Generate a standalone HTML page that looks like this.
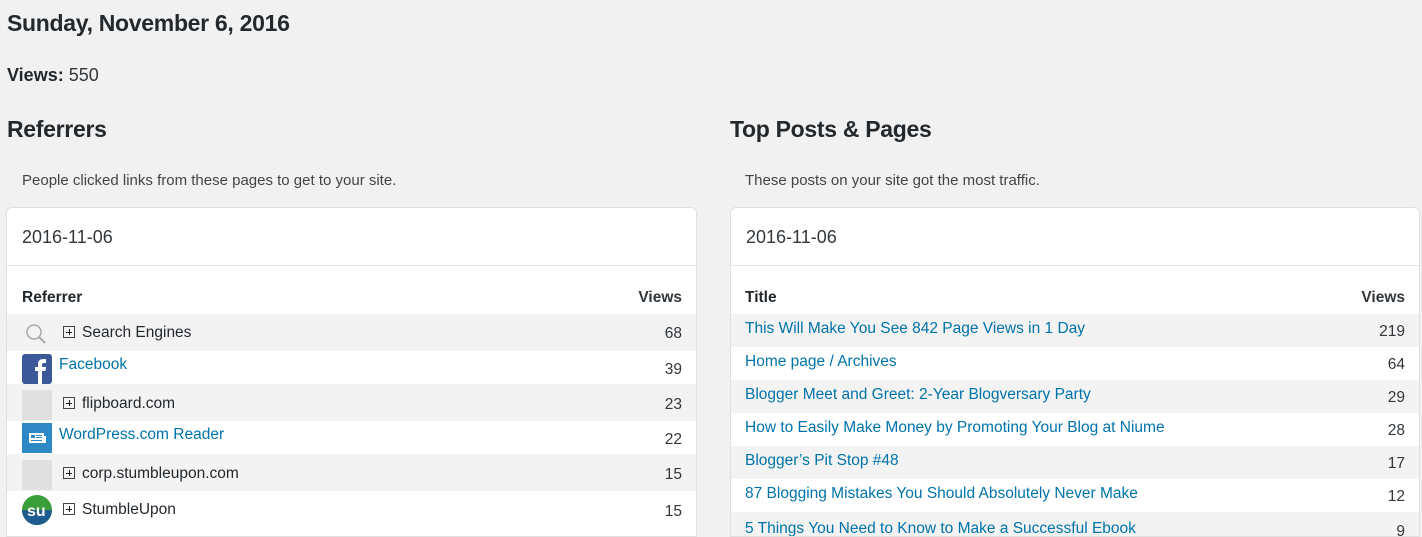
<!DOCTYPE html>
<html><head><style>
*{margin:0;padding:0;box-sizing:border-box}
body{width:1422px;height:525px;overflow:hidden;background:#f1f1f1;font-family:"Liberation Sans",sans-serif;color:#23282d;position:relative}
.a{position:absolute;white-space:nowrap}
h1{position:absolute;left:7px;top:10px;font-size:23px;font-weight:bold;color:#23282d;letter-spacing:-0.3px}
.panel{position:absolute;top:207px;background:#fff;border:1px solid #e0e0e0;border-radius:6px 6px 0 0;height:330px;overflow:hidden}
.ph{height:58px;border-bottom:1px solid #e5e5e5;font-size:18px;padding:19px 0 0 15px;color:#32373c}
.row{position:absolute;left:0;right:0;font-size:15.5px}
.g{background:#f3f3f3}
.lnk{color:#0073aa}
.num{position:absolute;right:14px;color:#32373c}
.plus{display:inline-block;width:12px;height:12px;border:1px solid #444;position:relative;vertical-align:-1px;margin-right:7px}
.plus:before{content:"";position:absolute;left:2px;top:4.5px;width:6px;height:1px;background:#222}
.plus:after{content:"";position:absolute;left:4.5px;top:2px;width:1px;height:6px;background:#222}
.ic{position:absolute;left:15px;width:30px;height:30px}
</style></head><body>
<h1>Sunday, November 6, 2016</h1>
<div class="a" style="left:7px;top:65px;font-size:18px;color:#32373c"><span style="color:#23282d;font-weight:bold">Views:</span> 550</div>
<div class="a" style="left:7px;top:116px;font-size:23px;font-weight:bold;letter-spacing:-0.3px">Referrers</div>
<div class="a" style="left:730px;top:116px;font-size:23px;font-weight:bold;letter-spacing:-0.3px">Top Posts &amp; Pages</div>
<div class="a" style="left:22px;top:172px;font-size:15px;color:#444">People clicked links from these pages to get to your site.</div>
<div class="a" style="left:745px;top:172px;font-size:15px;color:#444">These posts on your site got the most traffic.</div>

<div class="panel" style="left:6px;width:691px">
<div class="ph">2016-11-06</div>
<div class="row" style="top:81px;height:20px;font-weight:bold;font-size:15.5px;padding-left:15px">Referrer<span class="num" style="top:0">Views</span></div>
<div class="row g" style="top:106px;height:37px"><svg class="ic" style="top:6px" viewBox="0 0 30 30"><circle cx="12" cy="12" r="7" fill="none" stroke="#aaa" stroke-width="1.5"/><line x1="17" y1="17" x2="23" y2="23" stroke="#aaa" stroke-width="2"/></svg><span class="a" style="left:56px;top:10px"><span class="plus"></span>Search Engines</span><span class="num" style="top:11px">68</span></div>
<div class="row" style="top:143px;height:33px"><svg class="ic" style="top:3px" viewBox="0 0 30 30"><rect width="30" height="30" rx="3" fill="#3b5998"/><path d="M16 30V17h-3v-4h3v-3c0-3 2-5 5-5h3v4h-2c-1 0-2 .5-2 2v2h4l-.5 4H20v13z" fill="#fff"/></svg><span class="a lnk" style="left:52px;top:5px">Facebook</span><span class="num" style="top:10px">39</span></div>
<div class="row g" style="top:176px;height:37px"><div class="ic" style="top:6px;background:#e0e0e0"></div><span class="a" style="left:56px;top:11px"><span class="plus"></span>flipboard.com</span><span class="num" style="top:12px">23</span></div>
<div class="row" style="top:213px;height:33px"><svg class="ic" style="top:2px" viewBox="0 0 30 30"><rect width="30" height="30" fill="#2e88c6"/><rect x="7" y="10" width="15" height="10" fill="#fff"/><rect x="9" y="12" width="4" height="3" fill="#2e88c6"/><rect x="14" y="12" width="6" height="1" fill="#2e88c6"/><rect x="14" y="14" width="6" height="1" fill="#2e88c6"/><rect x="9" y="17" width="11" height="1" fill="#2e88c6"/><rect x="22" y="13" width="2" height="7" fill="#fff"/></svg><span class="a lnk" style="left:52px;top:5px">WordPress.com Reader</span><span class="num" style="top:10px">22</span></div>
<div class="row g" style="top:246px;height:37px"><div class="ic" style="top:6px;background:#e0e0e0"></div><span class="a" style="left:56px;top:11px"><span class="plus"></span>corp.stumbleupon.com</span><span class="num" style="top:12px">15</span></div>
<div class="row" style="top:283px;height:40px"><svg class="ic" style="top:4px" viewBox="0 0 30 30"><circle cx="15" cy="15" r="15" fill="#3a9e3a"/><path d="M0 15a15 15 0 0 0 30 0z" fill="#1f5c8f"/><text x="5" y="21" font-size="16" font-weight="bold" fill="#fff" font-family="Liberation Sans">su</text></svg><span class="a" style="left:56px;top:10px"><span class="plus"></span>StumbleUpon</span><span class="num" style="top:12px">15</span></div>
</div>

<div class="panel" style="left:730px;width:690px">
<div class="ph">2016-11-06</div>
<div class="row" style="top:81px;height:20px;font-weight:bold;padding-left:14px">Title<span class="num" style="top:0">Views</span></div>
<div class="row g" style="top:106px;height:33px"><span class="a lnk" style="left:14px;top:6px">This Will Make You See 842 Page Views in 1 Day</span><span class="num" style="top:9px">219</span></div>
<div class="row" style="top:139px;height:33px"><span class="a lnk" style="left:14px;top:6px">Home page / Archives</span><span class="num" style="top:9px">64</span></div>
<div class="row g" style="top:172px;height:33px"><span class="a lnk" style="left:14px;top:6px">Blogger Meet and Greet: 2-Year Blogversary Party</span><span class="num" style="top:9px">29</span></div>
<div class="row" style="top:205px;height:33px"><span class="a lnk" style="left:14px;top:6px">How to Easily Make Money by Promoting Your Blog at Niume</span><span class="num" style="top:9px">28</span></div>
<div class="row g" style="top:238px;height:33px"><span class="a lnk" style="left:14px;top:6px">Blogger’s Pit Stop #48</span><span class="num" style="top:9px">17</span></div>
<div class="row" style="top:271px;height:33px"><span class="a lnk" style="left:14px;top:6px">87 Blogging Mistakes You Should Absolutely Never Make</span><span class="num" style="top:9px">12</span></div>
<div class="row g" style="top:304px;height:33px"><span class="a lnk" style="left:14px;top:8px">5 Things You Need to Know to Make a Successful Ebook</span><span class="num" style="top:11px">9</span></div>
</div>
</body></html>
